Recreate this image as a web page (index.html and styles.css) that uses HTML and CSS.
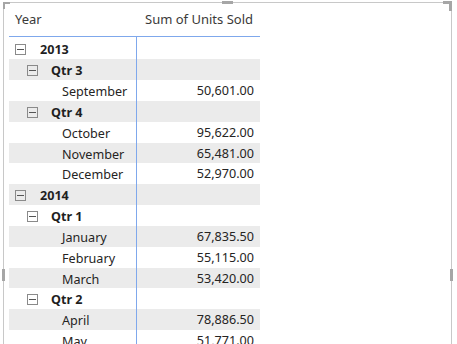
FILE: index.html
```html
<!DOCTYPE html>
<html>
<head>
<meta charset="utf-8">
<link rel="stylesheet" href="styles.css">
</head>
<body>
<div class="frame">
  <div class="handle h-tl"></div>
  <div class="handle h-tr"></div>
  <div class="handle h-top"></div>
  <div class="handle h-left"></div>
  <div class="handle h-right"></div>
  <div class="matrix">
    <div class="head">
      <div class="c1">Year</div>
      <div class="c2">Sum of Units Sold</div>
    </div>
    <div class="rows">
      <div class="row first"><div class="c1 l0"><span class="tog"></span><b>2013</b></div><div class="c2"></div></div>
      <div class="row alt"><div class="c1 l1"><span class="tog"></span><b>Qtr 3</b></div><div class="c2"></div></div>
      <div class="row"><div class="c1 l2">September</div><div class="c2">50,601.00</div></div>
      <div class="row alt"><div class="c1 l1"><span class="tog"></span><b>Qtr 4</b></div><div class="c2"></div></div>
      <div class="row"><div class="c1 l2">October</div><div class="c2">95,622.00</div></div>
      <div class="row alt"><div class="c1 l2">November</div><div class="c2">65,481.00</div></div>
      <div class="row"><div class="c1 l2">December</div><div class="c2">52,970.00</div></div>
      <div class="row alt"><div class="c1 l0"><span class="tog"></span><b>2014</b></div><div class="c2"></div></div>
      <div class="row"><div class="c1 l1"><span class="tog"></span><b>Qtr 1</b></div><div class="c2"></div></div>
      <div class="row alt"><div class="c1 l2">January</div><div class="c2">67,835.50</div></div>
      <div class="row"><div class="c1 l2">February</div><div class="c2">55,115.00</div></div>
      <div class="row alt"><div class="c1 l2">March</div><div class="c2">53,420.00</div></div>
      <div class="row"><div class="c1 l1"><span class="tog"></span><b>Qtr 2</b></div><div class="c2"></div></div>
      <div class="row alt"><div class="c1 l2">April</div><div class="c2">78,886.50</div></div>
      <div class="row"><div class="c1 l2">May</div><div class="c2">51,771.00</div></div>
    </div>
  </div>
</div>
</body>
</html>
```

FILE: styles.css
```css
html, body {
  margin: 0;
  padding: 0;
  height: 344px;
  overflow: hidden;
  background: #ffffff;
}
body {
  font-family: "Noto Sans", "Open Sans", sans-serif;
  font-size: 12.6px;
  color: #252423;
}
.frame {
  position: relative;
  box-sizing: border-box;
  margin: 2px 0 0 3px;
  width: 449px;
  height: 420px;
  border: 1px solid #c8c8c8;
}
.handle {
  position: absolute;
  background: #a6a6a6;
}
.h-tl {
  left: -1px;
  top: -1px;
  width: 7px;
  height: 7px;
  background: transparent;
  border-top: 2px solid #a6a6a6;
  border-left: 2px solid #a6a6a6;
  box-sizing: border-box;
}
.h-tr {
  right: -1px;
  top: -2px;
  width: 9px;
  height: 10px;
  background: transparent;
  border-top: 3px solid #a6a6a6;
  border-right: 3px solid #a6a6a6;
  box-sizing: border-box;
}
.h-top {
  left: 218px;
  top: -2px;
  width: 11px;
  height: 3px;
}
.h-left {
  left: -2px;
  top: 266px;
  width: 3px;
  height: 12px;
}
.h-right {
  right: -2px;
  top: 266px;
  width: 3px;
  height: 12px;
}
.matrix {
  margin-left: 5px;
  width: 251px;
}
.head {
  display: flex;
  box-sizing: border-box;
  height: 34px;
  border-bottom: 1px solid #7fa8ec;
  color: #3b3a39;
  font-size: 13px;
}
.head .c1 {
  width: 127px;
  padding: 8px 0 0 6px;
  line-height: 16px;
  box-sizing: border-box;
}
.head .c2 {
  flex: 1;
  padding: 8px 7px 0 0;
  line-height: 16px;
  text-align: right;
}
.row {
  display: flex;
  height: 20.83px;
}
.row.first {
  padding-top: 1.5px;
  box-sizing: border-box;
  height: 22.33px;
}
.row.alt {
  background: #ebebeb;
}
.row .c1 {
  box-sizing: border-box;
  width: 128px;
  padding-top: 2px;
  border-right: 1px solid #7fa8ec;
  display: flex;
  align-items: center;
  white-space: nowrap;
}
.row .c2 {
  flex: 1;
  text-align: right;
  padding: 2px 6px 0 0;
  line-height: 18.83px;
}
.row.first .c1 {
  margin-top: -1.5px;
  padding-top: 3.5px;
}
.c1.l0 { padding-left: 6px; }
.c1.l1 { padding-left: 18px; }
.c1.l2 { padding-left: 53px; }
.c1 b {
  font-weight: 700;
  color: #1f1f1f;
}
.l0 .tog { margin-right: 14px; }
.l1 .tog { margin-right: 13px; }
.tog {
  position: relative;
  box-sizing: border-box;
  width: 11px;
  height: 11px;
  border: 1px solid #8a8a8a;
  flex: none;
}
.tog::after {
  content: "";
  position: absolute;
  left: 1px;
  right: 1px;
  top: 4px;
  height: 1px;
  background: #555;
}
```
